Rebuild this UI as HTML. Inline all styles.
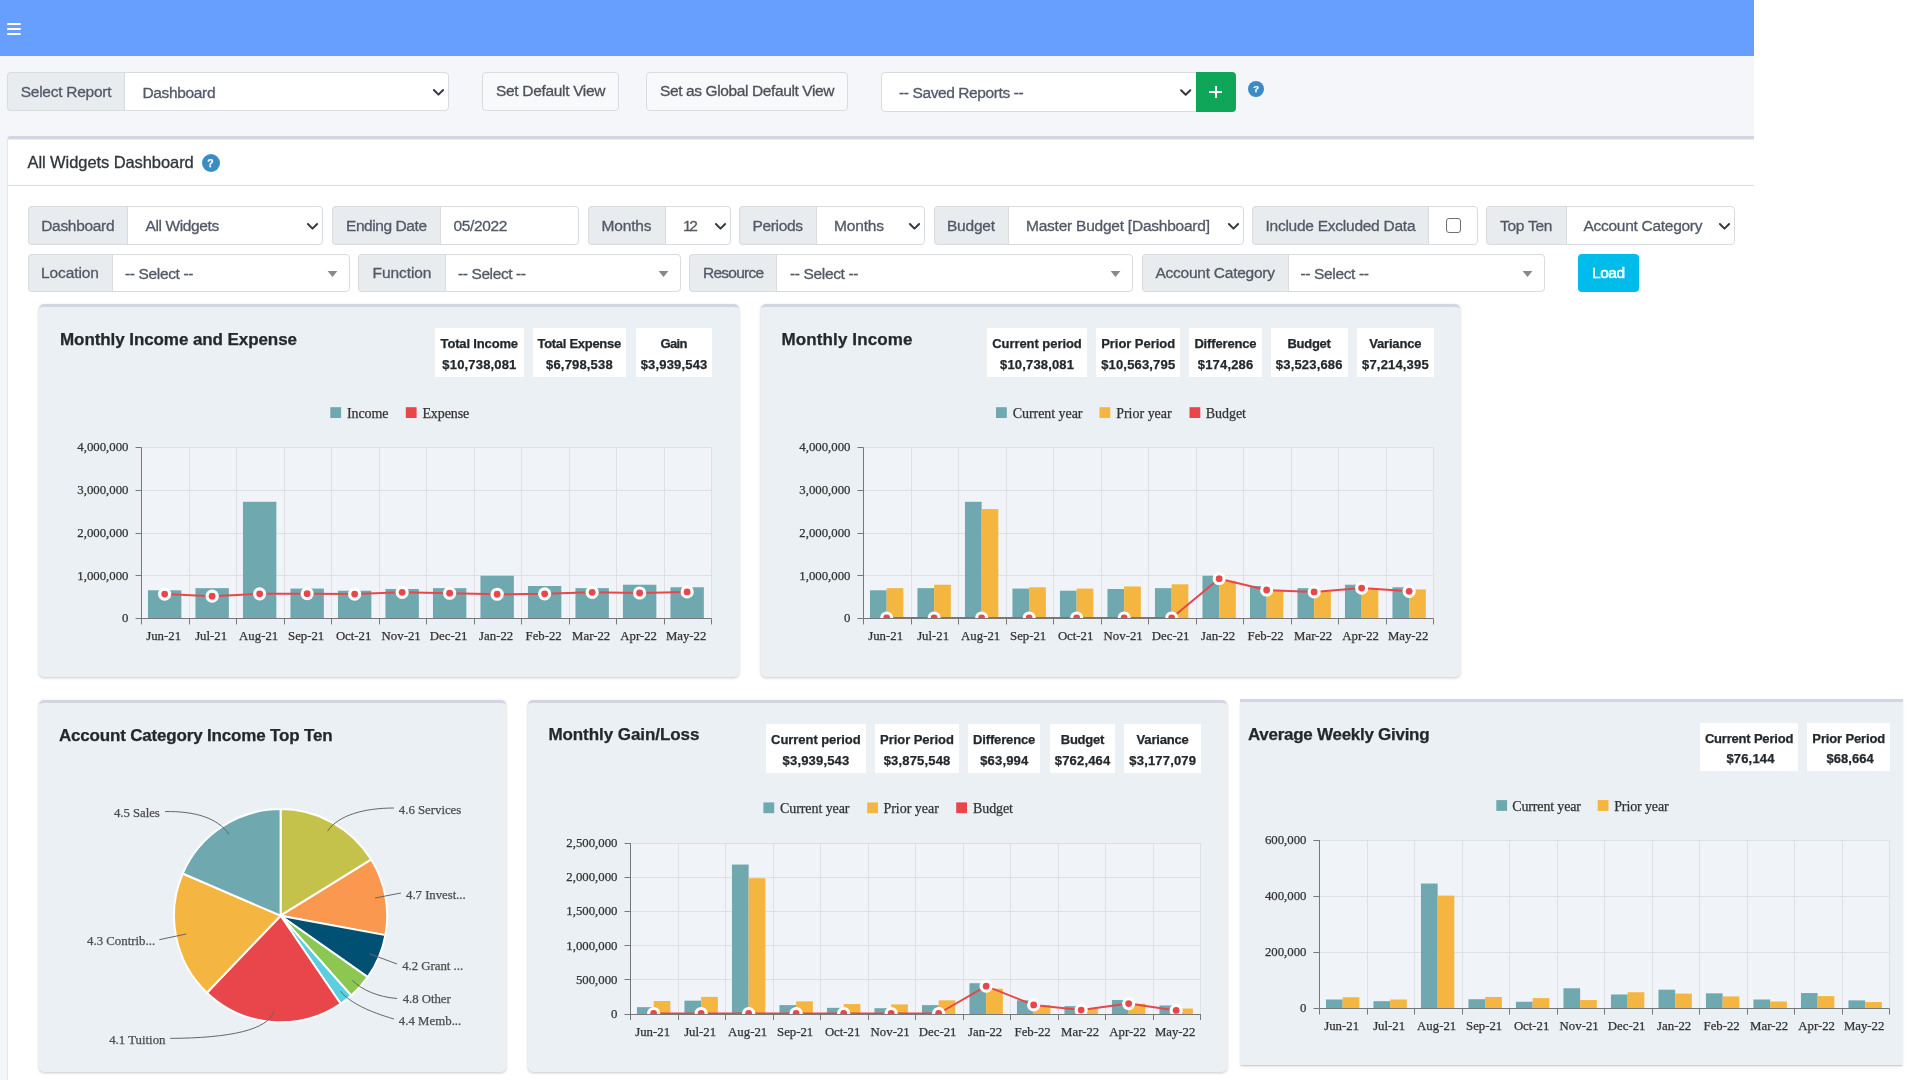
<!DOCTYPE html>
<html lang="en"><head><meta charset="utf-8"><title>All Widgets Dashboard</title>
<style>
html,body{margin:0;padding:0;background:#fff;}
body{width:1920px;height:1080px;overflow:hidden;position:relative;will-change:transform;font-family:"Liberation Sans",sans-serif;}
svg{position:absolute;left:0;top:0;}
</style></head><body>
<div style="position:absolute;left:0.00px;top:0.00px;width:1754.00px;height:1080.00px;box-sizing:border-box;background:#f4f6fa;"></div>
<div style="position:absolute;left:0.00px;top:0.00px;width:1754.00px;height:56.00px;box-sizing:border-box;background:#669fff;"></div>
<div style="position:absolute;left:7.00px;top:23.00px;width:14.00px;height:2.00px;box-sizing:border-box;background:#fff;border-radius:1px;"></div>
<div style="position:absolute;left:7.00px;top:28.00px;width:14.00px;height:2.00px;box-sizing:border-box;background:#fff;border-radius:1px;"></div>
<div style="position:absolute;left:7.00px;top:33.00px;width:14.00px;height:2.00px;box-sizing:border-box;background:#fff;border-radius:1px;"></div>
<div style="position:absolute;left:7.00px;top:72.00px;width:442.00px;height:39.00px;box-sizing:border-box;border:1px solid #d8dbe0;border-radius:4px;background:#fff;"></div>
<div style="position:absolute;left:7.00px;top:72.00px;width:117.50px;height:39.00px;box-sizing:border-box;border:1px solid #d8dbe0;border-radius:4px 0 0 4px;background:#e9ecef;"></div>
<div style="position:absolute;top:81.63px;line-height:20px;height:20px;white-space:pre;font-family:'Liberation Sans', sans-serif;font-size:15.5px;font-weight:400;color:#525866;letter-spacing:-0.264px;-webkit-text-stroke:0.3px #525866;left:20.75px;">Select Report</div>
<div style="position:absolute;top:82.83px;line-height:20px;height:20px;white-space:pre;font-family:'Liberation Sans', sans-serif;font-size:15.5px;font-weight:400;color:#525866;letter-spacing:-0.354px;-webkit-text-stroke:0.3px #525866;left:142.50px;">Dashboard</div>
<div style="position:absolute;left:482.00px;top:72.00px;width:137.00px;height:39.00px;box-sizing:border-box;border:1px solid #d8dbe0;border-radius:4px;background:#f8f9fa;"></div>
<div style="position:absolute;top:81.43px;line-height:20px;height:20px;white-space:pre;font-family:'Liberation Sans', sans-serif;font-size:15.5px;font-weight:400;color:#4d5157;letter-spacing:-0.321px;-webkit-text-stroke:0.3px #4d5157;left:496.00px;">Set Default View</div>
<div style="position:absolute;left:646.00px;top:72.00px;width:202.00px;height:39.00px;box-sizing:border-box;border:1px solid #d8dbe0;border-radius:4px;background:#f8f9fa;"></div>
<div style="position:absolute;top:81.43px;line-height:20px;height:20px;white-space:pre;font-family:'Liberation Sans', sans-serif;font-size:15.5px;font-weight:400;color:#4d5157;letter-spacing:-0.384px;-webkit-text-stroke:0.3px #4d5157;left:660.00px;">Set as Global Default View</div>
<div style="position:absolute;left:881.00px;top:72.00px;width:316.00px;height:39.50px;box-sizing:border-box;border:1px solid #d8dbe0;border-radius:4px 0 0 4px;background:#fff;"></div>
<div style="position:absolute;top:82.93px;line-height:20px;height:20px;white-space:pre;font-family:'Liberation Sans', sans-serif;font-size:15.5px;font-weight:400;color:#525866;letter-spacing:-0.405px;-webkit-text-stroke:0.3px #525866;left:899.10px;">-- Saved Reports --</div>
<div style="position:absolute;left:1195.50px;top:72.00px;width:40.50px;height:39.50px;box-sizing:border-box;background:#10a65a;border-radius:0 4px 4px 0;"></div>
<div style="position:absolute;left:1209.30px;top:91.00px;width:12.40px;height:2.00px;box-sizing:border-box;background:#fff;"></div>
<div style="position:absolute;left:1214.50px;top:85.80px;width:2.00px;height:12.40px;box-sizing:border-box;background:#fff;"></div>
<div style="position:absolute;left:1248.10px;top:81.10px;width:16.00px;height:16.00px;box-sizing:border-box;background:#3a8cc4;border-radius:50%;"></div>
<div style="position:absolute;top:79.23px;line-height:20px;height:20px;white-space:pre;font-family:'Liberation Sans', sans-serif;font-size:9.5px;font-weight:700;color:#fff;letter-spacing:0px;-webkit-text-stroke:0.25px #fff;left:1256.10px;width:0;display:flex;justify-content:center;"><span>?</span></div>
<div style="position:absolute;left:7.00px;top:136.00px;width:1918.00px;height:964.00px;box-sizing:border-box;background:#fff;border:1px solid #e4e7ea;border-top:3px solid #d3d6e0;border-radius:4px 0 0 0;"></div>
<div style="position:absolute;left:9.00px;top:139.00px;width:1745.00px;height:1.00px;box-sizing:border-box;background:#eceef2;"></div>
<div style="position:absolute;left:1754.00px;top:0.00px;width:166.00px;height:303.00px;box-sizing:border-box;background:#fff;"></div>
<div style="position:absolute;left:8.00px;top:185.00px;width:1746.00px;height:1.00px;box-sizing:border-box;background:#d8dbe0;"></div>
<div style="position:absolute;top:151.78px;line-height:20px;height:20px;white-space:pre;font-family:'Liberation Sans', sans-serif;font-size:16.5px;font-weight:400;color:#30353b;letter-spacing:-0.079px;-webkit-text-stroke:0.3px #30353b;left:27.50px;">All Widgets Dashboard</div>
<div style="position:absolute;left:201.50px;top:154.00px;width:18.00px;height:18.00px;box-sizing:border-box;background:#3a8cc4;border-radius:50%;"></div>
<div style="position:absolute;top:153.14px;line-height:20px;height:20px;white-space:pre;font-family:'Liberation Sans', sans-serif;font-size:10.5px;font-weight:700;color:#fff;letter-spacing:0px;-webkit-text-stroke:0.25px #fff;left:210.50px;width:0;display:flex;justify-content:center;"><span>?</span></div>
<div style="position:absolute;left:28.00px;top:206.00px;width:295.00px;height:39.00px;box-sizing:border-box;border:1px solid #d8dbe0;border-radius:4px;background:#fff;"></div>
<div style="position:absolute;left:28.00px;top:206.00px;width:99.50px;height:39.00px;box-sizing:border-box;border:1px solid #d8dbe0;border-radius:4px 0 0 4px;background:#e9ecef;"></div>
<div style="position:absolute;top:216.43px;line-height:20px;height:20px;white-space:pre;font-family:'Liberation Sans', sans-serif;font-size:15.5px;font-weight:400;color:#525866;letter-spacing:-0.322px;-webkit-text-stroke:0.3px #525866;left:41.25px;">Dashboard</div>
<div style="position:absolute;top:216.43px;line-height:20px;height:20px;white-space:pre;font-family:'Liberation Sans', sans-serif;font-size:15.5px;font-weight:400;color:#525866;letter-spacing:-0.378px;-webkit-text-stroke:0.3px #525866;left:145.50px;">All Widgets</div>
<div style="position:absolute;left:332.00px;top:206.00px;width:247.00px;height:39.00px;box-sizing:border-box;border:1px solid #d8dbe0;border-radius:4px;background:#fff;"></div>
<div style="position:absolute;left:332.00px;top:206.00px;width:109.00px;height:39.00px;box-sizing:border-box;border:1px solid #d8dbe0;border-radius:4px 0 0 4px;background:#e9ecef;"></div>
<div style="position:absolute;top:216.43px;line-height:20px;height:20px;white-space:pre;font-family:'Liberation Sans', sans-serif;font-size:15.5px;font-weight:400;color:#525866;letter-spacing:-0.431px;-webkit-text-stroke:0.3px #525866;left:346.00px;">Ending Date</div>
<div style="position:absolute;top:216.43px;line-height:20px;height:20px;white-space:pre;font-family:'Liberation Sans', sans-serif;font-size:15.5px;font-weight:400;color:#525866;letter-spacing:-0.339px;-webkit-text-stroke:0.3px #525866;left:453.50px;">05/2022</div>
<div style="position:absolute;left:588.00px;top:206.00px;width:143.00px;height:39.00px;box-sizing:border-box;border:1px solid #d8dbe0;border-radius:4px;background:#fff;"></div>
<div style="position:absolute;left:588.00px;top:206.00px;width:78.00px;height:39.00px;box-sizing:border-box;border:1px solid #d8dbe0;border-radius:4px 0 0 4px;background:#e9ecef;"></div>
<div style="position:absolute;top:216.43px;line-height:20px;height:20px;white-space:pre;font-family:'Liberation Sans', sans-serif;font-size:15.5px;font-weight:400;color:#525866;letter-spacing:-0.169px;-webkit-text-stroke:0.3px #525866;left:601.50px;">Months</div>
<div style="position:absolute;top:216.43px;line-height:20px;height:20px;white-space:pre;font-family:'Liberation Sans', sans-serif;font-size:15.5px;font-weight:400;color:#525866;letter-spacing:-2.25px;-webkit-text-stroke:0.3px #525866;left:683.00px;">12</div>
<div style="position:absolute;left:739.00px;top:206.00px;width:186.00px;height:39.00px;box-sizing:border-box;border:1px solid #d8dbe0;border-radius:4px;background:#fff;"></div>
<div style="position:absolute;left:739.00px;top:206.00px;width:78.00px;height:39.00px;box-sizing:border-box;border:1px solid #d8dbe0;border-radius:4px 0 0 4px;background:#e9ecef;"></div>
<div style="position:absolute;top:216.43px;line-height:20px;height:20px;white-space:pre;font-family:'Liberation Sans', sans-serif;font-size:15.5px;font-weight:400;color:#525866;letter-spacing:-0.344px;-webkit-text-stroke:0.3px #525866;left:752.50px;">Periods</div>
<div style="position:absolute;top:216.43px;line-height:20px;height:20px;white-space:pre;font-family:'Liberation Sans', sans-serif;font-size:15.5px;font-weight:400;color:#525866;letter-spacing:-0.169px;-webkit-text-stroke:0.3px #525866;left:834.00px;">Months</div>
<div style="position:absolute;left:934.00px;top:206.00px;width:310.00px;height:39.00px;box-sizing:border-box;border:1px solid #d8dbe0;border-radius:4px;background:#fff;"></div>
<div style="position:absolute;left:934.00px;top:206.00px;width:75.00px;height:39.00px;box-sizing:border-box;border:1px solid #d8dbe0;border-radius:4px 0 0 4px;background:#e9ecef;"></div>
<div style="position:absolute;top:216.43px;line-height:20px;height:20px;white-space:pre;font-family:'Liberation Sans', sans-serif;font-size:15.5px;font-weight:400;color:#525866;letter-spacing:-0.228px;-webkit-text-stroke:0.3px #525866;left:947.00px;">Budget</div>
<div style="position:absolute;top:216.43px;line-height:20px;height:20px;white-space:pre;font-family:'Liberation Sans', sans-serif;font-size:15.5px;font-weight:400;color:#525866;letter-spacing:-0.232px;-webkit-text-stroke:0.3px #525866;left:1026.00px;">Master Budget [Dashboard]</div>
<div style="position:absolute;left:1252.00px;top:206.00px;width:226.00px;height:39.00px;box-sizing:border-box;border:1px solid #d8dbe0;border-radius:4px;background:#fff;"></div>
<div style="position:absolute;left:1252.00px;top:206.00px;width:177.00px;height:39.00px;box-sizing:border-box;border:1px solid #d8dbe0;border-radius:4px 0 0 4px;background:#e9ecef;"></div>
<div style="position:absolute;top:216.43px;line-height:20px;height:20px;white-space:pre;font-family:'Liberation Sans', sans-serif;font-size:15.5px;font-weight:400;color:#525866;letter-spacing:-0.255px;-webkit-text-stroke:0.3px #525866;left:1265.50px;">Include Excluded Data</div>
<div style="position:absolute;left:1445.75px;top:218.30px;width:15.00px;height:15.00px;box-sizing:border-box;border:1.5px solid #6f6f6f;border-radius:3px;background:#fff;"></div>
<div style="position:absolute;left:1486.00px;top:206.00px;width:249.00px;height:39.00px;box-sizing:border-box;border:1px solid #d8dbe0;border-radius:4px;background:#fff;"></div>
<div style="position:absolute;left:1486.00px;top:206.00px;width:80.50px;height:39.00px;box-sizing:border-box;border:1px solid #d8dbe0;border-radius:4px 0 0 4px;background:#e9ecef;"></div>
<div style="position:absolute;top:216.43px;line-height:20px;height:20px;white-space:pre;font-family:'Liberation Sans', sans-serif;font-size:15.5px;font-weight:400;color:#525866;letter-spacing:-0.253px;-webkit-text-stroke:0.3px #525866;left:1500.00px;">Top Ten</div>
<div style="position:absolute;top:216.43px;line-height:20px;height:20px;white-space:pre;font-family:'Liberation Sans', sans-serif;font-size:15.5px;font-weight:400;color:#525866;letter-spacing:-0.281px;-webkit-text-stroke:0.3px #525866;left:1583.50px;">Account Category</div>
<div style="position:absolute;left:28.00px;top:254.00px;width:322.00px;height:38.00px;box-sizing:border-box;border:1px solid #d8dbe0;border-radius:4px;background:#fff;"></div>
<div style="position:absolute;left:28.00px;top:254.00px;width:84.50px;height:38.00px;box-sizing:border-box;border:1px solid #d8dbe0;border-radius:4px 0 0 4px;background:#e9ecef;"></div>
<div style="position:absolute;top:262.83px;line-height:20px;height:20px;white-space:pre;font-family:'Liberation Sans', sans-serif;font-size:15.5px;font-weight:400;color:#525866;letter-spacing:-0.087px;-webkit-text-stroke:0.3px #525866;left:41.00px;">Location</div>
<div style="position:absolute;top:264.03px;line-height:20px;height:20px;white-space:pre;font-family:'Liberation Sans', sans-serif;font-size:15.5px;font-weight:400;color:#525866;letter-spacing:-0.349px;-webkit-text-stroke:0.3px #525866;left:125.00px;">-- Select --</div>
<div style="position:absolute;left:358.00px;top:254.00px;width:323.00px;height:38.00px;box-sizing:border-box;border:1px solid #d8dbe0;border-radius:4px;background:#fff;"></div>
<div style="position:absolute;left:358.00px;top:254.00px;width:87.50px;height:38.00px;box-sizing:border-box;border:1px solid #d8dbe0;border-radius:4px 0 0 4px;background:#e9ecef;"></div>
<div style="position:absolute;top:262.83px;line-height:20px;height:20px;white-space:pre;font-family:'Liberation Sans', sans-serif;font-size:15.5px;font-weight:400;color:#525866;letter-spacing:-0.065px;-webkit-text-stroke:0.3px #525866;left:372.50px;">Function</div>
<div style="position:absolute;top:264.03px;line-height:20px;height:20px;white-space:pre;font-family:'Liberation Sans', sans-serif;font-size:15.5px;font-weight:400;color:#525866;letter-spacing:-0.395px;-webkit-text-stroke:0.3px #525866;left:458.00px;">-- Select --</div>
<div style="position:absolute;left:689.00px;top:254.00px;width:444.00px;height:38.00px;box-sizing:border-box;border:1px solid #d8dbe0;border-radius:4px;background:#fff;"></div>
<div style="position:absolute;left:689.00px;top:254.00px;width:88.00px;height:38.00px;box-sizing:border-box;border:1px solid #d8dbe0;border-radius:4px 0 0 4px;background:#e9ecef;"></div>
<div style="position:absolute;top:262.83px;line-height:20px;height:20px;white-space:pre;font-family:'Liberation Sans', sans-serif;font-size:15.5px;font-weight:400;color:#525866;letter-spacing:-0.763px;-webkit-text-stroke:0.3px #525866;left:703.00px;">Resource</div>
<div style="position:absolute;top:264.03px;line-height:20px;height:20px;white-space:pre;font-family:'Liberation Sans', sans-serif;font-size:15.5px;font-weight:400;color:#525866;letter-spacing:-0.349px;-webkit-text-stroke:0.3px #525866;left:790.00px;">-- Select --</div>
<div style="position:absolute;left:1142.00px;top:254.00px;width:403.00px;height:38.00px;box-sizing:border-box;border:1px solid #d8dbe0;border-radius:4px;background:#fff;"></div>
<div style="position:absolute;left:1142.00px;top:254.00px;width:146.50px;height:38.00px;box-sizing:border-box;border:1px solid #d8dbe0;border-radius:4px 0 0 4px;background:#e9ecef;"></div>
<div style="position:absolute;top:262.83px;line-height:20px;height:20px;white-space:pre;font-family:'Liberation Sans', sans-serif;font-size:15.5px;font-weight:400;color:#525866;letter-spacing:-0.248px;-webkit-text-stroke:0.3px #525866;left:1155.50px;">Account Category</div>
<div style="position:absolute;top:264.03px;line-height:20px;height:20px;white-space:pre;font-family:'Liberation Sans', sans-serif;font-size:15.5px;font-weight:400;color:#525866;letter-spacing:-0.349px;-webkit-text-stroke:0.3px #525866;left:1300.50px;">-- Select --</div>
<div style="position:absolute;left:1578.00px;top:254.00px;width:61.00px;height:38.00px;box-sizing:border-box;background:#00bcea;border-radius:4px;"></div>
<div style="position:absolute;top:263.13px;line-height:20px;height:20px;white-space:pre;font-family:'Liberation Sans', sans-serif;font-size:15.5px;font-weight:400;color:#fff;letter-spacing:-0.495px;-webkit-text-stroke:0.3px #fff;-webkit-text-stroke:0.5px #fff;left:1592.00px;">Load</div>
<div style="position:absolute;left:39.00px;top:304.00px;width:700.00px;height:372.50px;box-sizing:border-box;background:#ebf0f4;border-top:3px solid #d3d6e0;border-radius:5px;box-shadow:0 1px 3px rgba(0,0,0,.22);"></div>
<div style="position:absolute;top:329.61px;line-height:20px;height:20px;white-space:pre;font-family:'Liberation Sans', sans-serif;font-size:17px;font-weight:700;color:#23282c;letter-spacing:-0.08px;-webkit-text-stroke:0.25px #23282c;left:60.00px;">Monthly Income and Expense</div>
<div style="position:absolute;left:435.00px;top:328.00px;width:88.70px;height:49.00px;box-sizing:border-box;background:#fff;"></div>
<div style="position:absolute;top:334.32px;line-height:20px;height:20px;white-space:pre;font-family:'Liberation Sans', sans-serif;font-size:13px;font-weight:700;color:#23282c;letter-spacing:-0.156px;-webkit-text-stroke:0.25px #23282c;left:479.27px;width:0;display:flex;justify-content:center;"><span>Total Income</span></div>
<div style="position:absolute;top:355.15px;line-height:20px;height:20px;white-space:pre;font-family:'Liberation Sans', sans-serif;font-size:13px;font-weight:700;color:#23282c;letter-spacing:0.17px;-webkit-text-stroke:0.25px #23282c;left:479.44px;width:0;display:flex;justify-content:center;"><span>$10,738,081</span></div>
<div style="position:absolute;left:532.90px;top:328.00px;width:92.90px;height:49.00px;box-sizing:border-box;background:#fff;"></div>
<div style="position:absolute;top:334.32px;line-height:20px;height:20px;white-space:pre;font-family:'Liberation Sans', sans-serif;font-size:13px;font-weight:700;color:#23282c;letter-spacing:-0.291px;-webkit-text-stroke:0.25px #23282c;left:579.20px;width:0;display:flex;justify-content:center;"><span>Total Expense</span></div>
<div style="position:absolute;top:355.15px;line-height:20px;height:20px;white-space:pre;font-family:'Liberation Sans', sans-serif;font-size:13px;font-weight:700;color:#23282c;letter-spacing:0.17px;-webkit-text-stroke:0.25px #23282c;left:579.43px;width:0;display:flex;justify-content:center;"><span>$6,798,538</span></div>
<div style="position:absolute;left:635.60px;top:328.00px;width:76.80px;height:49.00px;box-sizing:border-box;background:#fff;"></div>
<div style="position:absolute;top:334.32px;line-height:20px;height:20px;white-space:pre;font-family:'Liberation Sans', sans-serif;font-size:13px;font-weight:700;color:#23282c;letter-spacing:-0.669px;-webkit-text-stroke:0.25px #23282c;left:673.67px;width:0;display:flex;justify-content:center;"><span>Gain</span></div>
<div style="position:absolute;top:355.15px;line-height:20px;height:20px;white-space:pre;font-family:'Liberation Sans', sans-serif;font-size:13px;font-weight:700;color:#23282c;letter-spacing:0.17px;-webkit-text-stroke:0.25px #23282c;left:674.09px;width:0;display:flex;justify-content:center;"><span>$3,939,543</span></div>
<div style="position:absolute;left:760.50px;top:304.00px;width:699.50px;height:372.50px;box-sizing:border-box;background:#ebf0f4;border-top:3px solid #d3d6e0;border-radius:5px;box-shadow:0 1px 3px rgba(0,0,0,.22);"></div>
<div style="position:absolute;top:329.61px;line-height:20px;height:20px;white-space:pre;font-family:'Liberation Sans', sans-serif;font-size:17px;font-weight:700;color:#23282c;letter-spacing:0.138px;-webkit-text-stroke:0.25px #23282c;left:781.40px;">Monthly Income</div>
<div style="position:absolute;left:987.00px;top:328.00px;width:100.00px;height:49.00px;box-sizing:border-box;background:#fff;"></div>
<div style="position:absolute;top:334.32px;line-height:20px;height:20px;white-space:pre;font-family:'Liberation Sans', sans-serif;font-size:13px;font-weight:700;color:#23282c;letter-spacing:-0.054px;-webkit-text-stroke:0.25px #23282c;left:1036.97px;width:0;display:flex;justify-content:center;"><span>Current period</span></div>
<div style="position:absolute;top:355.15px;line-height:20px;height:20px;white-space:pre;font-family:'Liberation Sans', sans-serif;font-size:13px;font-weight:700;color:#23282c;letter-spacing:0.17px;-webkit-text-stroke:0.25px #23282c;left:1037.09px;width:0;display:flex;justify-content:center;"><span>$10,738,081</span></div>
<div style="position:absolute;left:1096.30px;top:328.00px;width:83.70px;height:49.00px;box-sizing:border-box;background:#fff;"></div>
<div style="position:absolute;top:334.32px;line-height:20px;height:20px;white-space:pre;font-family:'Liberation Sans', sans-serif;font-size:13px;font-weight:700;color:#23282c;letter-spacing:-0.047px;-webkit-text-stroke:0.25px #23282c;left:1138.13px;width:0;display:flex;justify-content:center;"><span>Prior Period</span></div>
<div style="position:absolute;top:355.15px;line-height:20px;height:20px;white-space:pre;font-family:'Liberation Sans', sans-serif;font-size:13px;font-weight:700;color:#23282c;letter-spacing:0.17px;-webkit-text-stroke:0.25px #23282c;left:1138.24px;width:0;display:flex;justify-content:center;"><span>$10,563,795</span></div>
<div style="position:absolute;left:1189.30px;top:328.00px;width:72.40px;height:49.00px;box-sizing:border-box;background:#fff;"></div>
<div style="position:absolute;top:334.32px;line-height:20px;height:20px;white-space:pre;font-family:'Liberation Sans', sans-serif;font-size:13px;font-weight:700;color:#23282c;letter-spacing:-0.153px;-webkit-text-stroke:0.25px #23282c;left:1225.42px;width:0;display:flex;justify-content:center;"><span>Difference</span></div>
<div style="position:absolute;top:355.15px;line-height:20px;height:20px;white-space:pre;font-family:'Liberation Sans', sans-serif;font-size:13px;font-weight:700;color:#23282c;letter-spacing:0.17px;-webkit-text-stroke:0.25px #23282c;left:1225.59px;width:0;display:flex;justify-content:center;"><span>$174,286</span></div>
<div style="position:absolute;left:1270.70px;top:328.00px;width:76.90px;height:49.00px;box-sizing:border-box;background:#fff;"></div>
<div style="position:absolute;top:334.32px;line-height:20px;height:20px;white-space:pre;font-family:'Liberation Sans', sans-serif;font-size:13px;font-weight:700;color:#23282c;letter-spacing:-0.256px;-webkit-text-stroke:0.25px #23282c;left:1309.02px;width:0;display:flex;justify-content:center;"><span>Budget</span></div>
<div style="position:absolute;top:355.15px;line-height:20px;height:20px;white-space:pre;font-family:'Liberation Sans', sans-serif;font-size:13px;font-weight:700;color:#23282c;letter-spacing:0.17px;-webkit-text-stroke:0.25px #23282c;left:1309.24px;width:0;display:flex;justify-content:center;"><span>$3,523,686</span></div>
<div style="position:absolute;left:1356.90px;top:328.00px;width:76.90px;height:49.00px;box-sizing:border-box;background:#fff;"></div>
<div style="position:absolute;top:334.32px;line-height:20px;height:20px;white-space:pre;font-family:'Liberation Sans', sans-serif;font-size:13px;font-weight:700;color:#23282c;letter-spacing:-0.2px;-webkit-text-stroke:0.25px #23282c;left:1395.25px;width:0;display:flex;justify-content:center;"><span>Variance</span></div>
<div style="position:absolute;top:355.15px;line-height:20px;height:20px;white-space:pre;font-family:'Liberation Sans', sans-serif;font-size:13px;font-weight:700;color:#23282c;letter-spacing:0.17px;-webkit-text-stroke:0.25px #23282c;left:1395.43px;width:0;display:flex;justify-content:center;"><span>$7,214,395</span></div>
<div style="position:absolute;left:39.00px;top:700.00px;width:467.00px;height:372.00px;box-sizing:border-box;background:#ebf0f4;border-top:3px solid #d3d6e0;border-radius:5px;box-shadow:0 1px 3px rgba(0,0,0,.22);"></div>
<div style="position:absolute;top:725.61px;line-height:20px;height:20px;white-space:pre;font-family:'Liberation Sans', sans-serif;font-size:17px;font-weight:700;color:#23282c;letter-spacing:-0.175px;-webkit-text-stroke:0.25px #23282c;left:58.90px;">Account Category Income Top Ten</div>
<div style="position:absolute;left:528.00px;top:700.00px;width:699.00px;height:372.00px;box-sizing:border-box;background:#ebf0f4;border-top:3px solid #d3d6e0;border-radius:5px;box-shadow:0 1px 3px rgba(0,0,0,.22);"></div>
<div style="position:absolute;top:725.41px;line-height:20px;height:20px;white-space:pre;font-family:'Liberation Sans', sans-serif;font-size:17px;font-weight:700;color:#23282c;letter-spacing:-0.066px;-webkit-text-stroke:0.25px #23282c;left:548.40px;">Monthly Gain/Loss</div>
<div style="position:absolute;left:765.90px;top:724.00px;width:100.00px;height:49.00px;box-sizing:border-box;background:#fff;"></div>
<div style="position:absolute;top:730.32px;line-height:20px;height:20px;white-space:pre;font-family:'Liberation Sans', sans-serif;font-size:13px;font-weight:700;color:#23282c;letter-spacing:-0.054px;-webkit-text-stroke:0.25px #23282c;left:815.87px;width:0;display:flex;justify-content:center;"><span>Current period</span></div>
<div style="position:absolute;top:751.15px;line-height:20px;height:20px;white-space:pre;font-family:'Liberation Sans', sans-serif;font-size:13px;font-weight:700;color:#23282c;letter-spacing:0.17px;-webkit-text-stroke:0.25px #23282c;left:815.99px;width:0;display:flex;justify-content:center;"><span>$3,939,543</span></div>
<div style="position:absolute;left:875.00px;top:724.00px;width:84.00px;height:49.00px;box-sizing:border-box;background:#fff;"></div>
<div style="position:absolute;top:730.32px;line-height:20px;height:20px;white-space:pre;font-family:'Liberation Sans', sans-serif;font-size:13px;font-weight:700;color:#23282c;letter-spacing:-0.047px;-webkit-text-stroke:0.25px #23282c;left:916.98px;width:0;display:flex;justify-content:center;"><span>Prior Period</span></div>
<div style="position:absolute;top:751.15px;line-height:20px;height:20px;white-space:pre;font-family:'Liberation Sans', sans-serif;font-size:13px;font-weight:700;color:#23282c;letter-spacing:0.17px;-webkit-text-stroke:0.25px #23282c;left:917.09px;width:0;display:flex;justify-content:center;"><span>$3,875,548</span></div>
<div style="position:absolute;left:968.00px;top:724.00px;width:72.40px;height:49.00px;box-sizing:border-box;background:#fff;"></div>
<div style="position:absolute;top:730.32px;line-height:20px;height:20px;white-space:pre;font-family:'Liberation Sans', sans-serif;font-size:13px;font-weight:700;color:#23282c;letter-spacing:-0.153px;-webkit-text-stroke:0.25px #23282c;left:1004.12px;width:0;display:flex;justify-content:center;"><span>Difference</span></div>
<div style="position:absolute;top:751.15px;line-height:20px;height:20px;white-space:pre;font-family:'Liberation Sans', sans-serif;font-size:13px;font-weight:700;color:#23282c;letter-spacing:0.17px;-webkit-text-stroke:0.25px #23282c;left:1004.29px;width:0;display:flex;justify-content:center;"><span>$63,994</span></div>
<div style="position:absolute;left:1050.00px;top:724.00px;width:65.00px;height:49.00px;box-sizing:border-box;background:#fff;"></div>
<div style="position:absolute;top:730.32px;line-height:20px;height:20px;white-space:pre;font-family:'Liberation Sans', sans-serif;font-size:13px;font-weight:700;color:#23282c;letter-spacing:-0.256px;-webkit-text-stroke:0.25px #23282c;left:1082.37px;width:0;display:flex;justify-content:center;"><span>Budget</span></div>
<div style="position:absolute;top:751.15px;line-height:20px;height:20px;white-space:pre;font-family:'Liberation Sans', sans-serif;font-size:13px;font-weight:700;color:#23282c;letter-spacing:0.17px;-webkit-text-stroke:0.25px #23282c;left:1082.59px;width:0;display:flex;justify-content:center;"><span>$762,464</span></div>
<div style="position:absolute;left:1124.00px;top:724.00px;width:77.30px;height:49.00px;box-sizing:border-box;background:#fff;"></div>
<div style="position:absolute;top:730.32px;line-height:20px;height:20px;white-space:pre;font-family:'Liberation Sans', sans-serif;font-size:13px;font-weight:700;color:#23282c;letter-spacing:-0.2px;-webkit-text-stroke:0.25px #23282c;left:1162.55px;width:0;display:flex;justify-content:center;"><span>Variance</span></div>
<div style="position:absolute;top:751.15px;line-height:20px;height:20px;white-space:pre;font-family:'Liberation Sans', sans-serif;font-size:13px;font-weight:700;color:#23282c;letter-spacing:0.17px;-webkit-text-stroke:0.25px #23282c;left:1162.74px;width:0;display:flex;justify-content:center;"><span>$3,177,079</span></div>
<div style="position:absolute;left:1240.00px;top:699.00px;width:663.00px;height:366.00px;box-sizing:border-box;background:#ebf0f4;border-top:3px solid #d3d6e0;box-shadow:0 1px 0 rgba(0,0,0,.07),0 2px 3px -1px rgba(0,0,0,.2);"></div>
<div style="position:absolute;top:724.61px;line-height:20px;height:20px;white-space:pre;font-family:'Liberation Sans', sans-serif;font-size:17px;font-weight:700;color:#23282c;letter-spacing:-0.275px;-webkit-text-stroke:0.25px #23282c;left:1248.00px;">Average Weekly Giving</div>
<div style="position:absolute;left:1699.70px;top:723.20px;width:98.30px;height:47.80px;box-sizing:border-box;background:#fff;"></div>
<div style="position:absolute;top:728.51px;line-height:20px;height:20px;white-space:pre;font-family:'Liberation Sans', sans-serif;font-size:13px;font-weight:700;color:#23282c;letter-spacing:-0.194px;-webkit-text-stroke:0.25px #23282c;left:1749.05px;width:0;display:flex;justify-content:center;"><span>Current Period</span></div>
<div style="position:absolute;top:749.33px;line-height:20px;height:20px;white-space:pre;font-family:'Liberation Sans', sans-serif;font-size:13px;font-weight:700;color:#23282c;letter-spacing:0.17px;-webkit-text-stroke:0.25px #23282c;left:1750.53px;width:0;display:flex;justify-content:center;"><span>$76,144</span></div>
<div style="position:absolute;left:1807.30px;top:723.20px;width:82.30px;height:47.80px;box-sizing:border-box;background:#fff;"></div>
<div style="position:absolute;top:728.51px;line-height:20px;height:20px;white-space:pre;font-family:'Liberation Sans', sans-serif;font-size:13px;font-weight:700;color:#23282c;letter-spacing:-0.148px;-webkit-text-stroke:0.25px #23282c;left:1848.68px;width:0;display:flex;justify-content:center;"><span>Prior Period</span></div>
<div style="position:absolute;top:749.33px;line-height:20px;height:20px;white-space:pre;font-family:'Liberation Sans', sans-serif;font-size:13px;font-weight:700;color:#23282c;letter-spacing:0.059px;-webkit-text-stroke:0.25px #23282c;left:1850.08px;width:0;display:flex;justify-content:center;"><span>$68,664</span></div>
<svg width="1920" height="1080" viewBox="0 0 1920 1080">
<path d="M433.90 90.00 l4.6 4.6 l4.6 -4.6" fill="none" stroke="#343a40" stroke-width="2" stroke-linecap="round" stroke-linejoin="round"/>
<path d="M1181.10 90.20 l4.6 4.6 l4.6 -4.6" fill="none" stroke="#343a40" stroke-width="2" stroke-linecap="round" stroke-linejoin="round"/>
<path d="M307.90 224.00 l4.6 4.6 l4.6 -4.6" fill="none" stroke="#343a40" stroke-width="2" stroke-linecap="round" stroke-linejoin="round"/>
<path d="M715.90 224.00 l4.6 4.6 l4.6 -4.6" fill="none" stroke="#343a40" stroke-width="2" stroke-linecap="round" stroke-linejoin="round"/>
<path d="M909.90 224.00 l4.6 4.6 l4.6 -4.6" fill="none" stroke="#343a40" stroke-width="2" stroke-linecap="round" stroke-linejoin="round"/>
<path d="M1228.90 224.00 l4.6 4.6 l4.6 -4.6" fill="none" stroke="#343a40" stroke-width="2" stroke-linecap="round" stroke-linejoin="round"/>
<path d="M1719.90 224.00 l4.6 4.6 l4.6 -4.6" fill="none" stroke="#343a40" stroke-width="2" stroke-linecap="round" stroke-linejoin="round"/>
<path d="M327.60 271.10 h9.8 l-4.9 6 z" fill="#888"/>
<path d="M658.60 271.10 h9.8 l-4.9 6 z" fill="#888"/>
<path d="M1110.60 271.10 h9.8 l-4.9 6 z" fill="#888"/>
<path d="M1522.60 271.10 h9.8 l-4.9 6 z" fill="#888"/>
<rect x="141.50" y="447.50" width="570.00" height="171.00" fill="#f0f4f8"/>
<path d="M141.50 575.50H711.50M141.50 533.50H711.50M141.50 490.50H711.50M141.50 447.50H711.50M189.50 447.50V618.50M236.50 447.50V618.50M284.50 447.50V618.50M331.50 447.50V618.50M379.50 447.50V618.50M426.50 447.50V618.50M474.50 447.50V618.50M521.50 447.50V618.50M569.50 447.50V618.50M616.50 447.50V618.50M664.50 447.50V618.50M711.50 447.50V618.50" stroke="#e0e0e0" stroke-width="1" fill="none"/>
<rect x="147.95" y="590.28" width="33.40" height="28.21" fill="#6fa8af"/>
<rect x="195.45" y="588.15" width="33.40" height="30.35" fill="#6fa8af"/>
<rect x="242.95" y="501.79" width="33.40" height="116.71" fill="#6fa8af"/>
<rect x="290.45" y="588.58" width="33.40" height="29.93" fill="#6fa8af"/>
<rect x="337.95" y="590.71" width="33.40" height="27.79" fill="#6fa8af"/>
<rect x="385.45" y="589.00" width="33.40" height="29.50" fill="#6fa8af"/>
<rect x="432.95" y="588.15" width="33.40" height="30.35" fill="#6fa8af"/>
<rect x="480.45" y="575.75" width="33.40" height="42.75" fill="#6fa8af"/>
<rect x="527.95" y="586.01" width="33.40" height="32.49" fill="#6fa8af"/>
<rect x="575.45" y="588.15" width="33.40" height="30.35" fill="#6fa8af"/>
<rect x="622.95" y="584.73" width="33.40" height="33.77" fill="#6fa8af"/>
<rect x="670.45" y="587.29" width="33.40" height="31.21" fill="#6fa8af"/>
<clipPath id="cp1"><rect x="140.50" y="446.50" width="572.00" height="172.50"/></clipPath>
<g clip-path="url(#cp1)"><polyline points="164.65,594.06 212.15,596.20 259.65,593.85 307.15,593.63 354.65,594.06 402.15,592.35 449.65,593.21 497.15,594.27 544.65,593.85 592.15,592.35 639.65,592.99 687.15,591.92" fill="none" stroke="#e8464b" stroke-width="2" stroke-linejoin="round"/><circle cx="164.65" cy="594.06" r="6.6" fill="#fff"/><circle cx="164.65" cy="594.06" r="3.4" fill="#e8464b"/><circle cx="212.15" cy="596.20" r="6.6" fill="#fff"/><circle cx="212.15" cy="596.20" r="3.4" fill="#e8464b"/><circle cx="259.65" cy="593.85" r="6.6" fill="#fff"/><circle cx="259.65" cy="593.85" r="3.4" fill="#e8464b"/><circle cx="307.15" cy="593.63" r="6.6" fill="#fff"/><circle cx="307.15" cy="593.63" r="3.4" fill="#e8464b"/><circle cx="354.65" cy="594.06" r="6.6" fill="#fff"/><circle cx="354.65" cy="594.06" r="3.4" fill="#e8464b"/><circle cx="402.15" cy="592.35" r="6.6" fill="#fff"/><circle cx="402.15" cy="592.35" r="3.4" fill="#e8464b"/><circle cx="449.65" cy="593.21" r="6.6" fill="#fff"/><circle cx="449.65" cy="593.21" r="3.4" fill="#e8464b"/><circle cx="497.15" cy="594.27" r="6.6" fill="#fff"/><circle cx="497.15" cy="594.27" r="3.4" fill="#e8464b"/><circle cx="544.65" cy="593.85" r="6.6" fill="#fff"/><circle cx="544.65" cy="593.85" r="3.4" fill="#e8464b"/><circle cx="592.15" cy="592.35" r="6.6" fill="#fff"/><circle cx="592.15" cy="592.35" r="3.4" fill="#e8464b"/><circle cx="639.65" cy="592.99" r="6.6" fill="#fff"/><circle cx="639.65" cy="592.99" r="3.4" fill="#e8464b"/><circle cx="687.15" cy="591.92" r="6.6" fill="#fff"/><circle cx="687.15" cy="591.92" r="3.4" fill="#e8464b"/></g>
<path d="M141.50 447.50V618.50M141.50 618.50H711.50M141.50 618.50h-6M141.50 575.50h-6M141.50 533.50h-6M141.50 490.50h-6M141.50 447.50h-6M141.50 618.50v6M189.50 618.50v6M236.50 618.50v6M284.50 618.50v6M331.50 618.50v6M379.50 618.50v6M426.50 618.50v6M474.50 618.50v6M521.50 618.50v6M569.50 618.50v6M616.50 618.50v6M664.50 618.50v6M711.50 618.50v6" stroke="#787878" stroke-width="1" fill="none"/>
<text x="128.50" y="622.40" font-family='Liberation Serif, serif' font-size="12.8" font-weight="400" text-anchor="end" fill="#333" stroke="#333" stroke-width="0.25" letter-spacing="0">0</text>
<text x="128.50" y="579.65" font-family='Liberation Serif, serif' font-size="12.8" font-weight="400" text-anchor="end" fill="#333" stroke="#333" stroke-width="0.25" letter-spacing="0">1,000,000</text>
<text x="128.50" y="536.90" font-family='Liberation Serif, serif' font-size="12.8" font-weight="400" text-anchor="end" fill="#333" stroke="#333" stroke-width="0.25" letter-spacing="0">2,000,000</text>
<text x="128.50" y="494.15" font-family='Liberation Serif, serif' font-size="12.8" font-weight="400" text-anchor="end" fill="#333" stroke="#333" stroke-width="0.25" letter-spacing="0">3,000,000</text>
<text x="128.50" y="451.40" font-family='Liberation Serif, serif' font-size="12.8" font-weight="400" text-anchor="end" fill="#333" stroke="#333" stroke-width="0.25" letter-spacing="0">4,000,000</text>
<text x="163.65" y="640.10" font-family='Liberation Serif, serif' font-size="12.8" font-weight="400" text-anchor="middle" fill="#333" stroke="#333" stroke-width="0.25" letter-spacing="0">Jun-21</text>
<text x="211.15" y="640.10" font-family='Liberation Serif, serif' font-size="12.8" font-weight="400" text-anchor="middle" fill="#333" stroke="#333" stroke-width="0.25" letter-spacing="0">Jul-21</text>
<text x="258.65" y="640.10" font-family='Liberation Serif, serif' font-size="12.8" font-weight="400" text-anchor="middle" fill="#333" stroke="#333" stroke-width="0.25" letter-spacing="0">Aug-21</text>
<text x="306.15" y="640.10" font-family='Liberation Serif, serif' font-size="12.8" font-weight="400" text-anchor="middle" fill="#333" stroke="#333" stroke-width="0.25" letter-spacing="0">Sep-21</text>
<text x="353.65" y="640.10" font-family='Liberation Serif, serif' font-size="12.8" font-weight="400" text-anchor="middle" fill="#333" stroke="#333" stroke-width="0.25" letter-spacing="0">Oct-21</text>
<text x="401.15" y="640.10" font-family='Liberation Serif, serif' font-size="12.8" font-weight="400" text-anchor="middle" fill="#333" stroke="#333" stroke-width="0.25" letter-spacing="0">Nov-21</text>
<text x="448.65" y="640.10" font-family='Liberation Serif, serif' font-size="12.8" font-weight="400" text-anchor="middle" fill="#333" stroke="#333" stroke-width="0.25" letter-spacing="0">Dec-21</text>
<text x="496.15" y="640.10" font-family='Liberation Serif, serif' font-size="12.8" font-weight="400" text-anchor="middle" fill="#333" stroke="#333" stroke-width="0.25" letter-spacing="0">Jan-22</text>
<text x="543.65" y="640.10" font-family='Liberation Serif, serif' font-size="12.8" font-weight="400" text-anchor="middle" fill="#333" stroke="#333" stroke-width="0.25" letter-spacing="0">Feb-22</text>
<text x="591.15" y="640.10" font-family='Liberation Serif, serif' font-size="12.8" font-weight="400" text-anchor="middle" fill="#333" stroke="#333" stroke-width="0.25" letter-spacing="0">Mar-22</text>
<text x="638.65" y="640.10" font-family='Liberation Serif, serif' font-size="12.8" font-weight="400" text-anchor="middle" fill="#333" stroke="#333" stroke-width="0.25" letter-spacing="0">Apr-22</text>
<text x="686.15" y="640.10" font-family='Liberation Serif, serif' font-size="12.8" font-weight="400" text-anchor="middle" fill="#333" stroke="#333" stroke-width="0.25" letter-spacing="0">May-22</text>
<rect x="330.30" y="407.20" width="10.80" height="10.80" fill="#6fa8af"/>
<text x="347.00" y="418.00" font-family='Liberation Serif, serif' font-size="14" font-weight="400" text-anchor="start" fill="#333" stroke="#333" stroke-width="0.25" letter-spacing="-0.117">Income</text>
<rect x="405.80" y="407.20" width="10.80" height="10.80" fill="#e8464b"/>
<text x="422.40" y="418.00" font-family='Liberation Serif, serif' font-size="14" font-weight="400" text-anchor="start" fill="#333" stroke="#333" stroke-width="0.25" letter-spacing="-0.09">Expense</text>
<rect x="863.50" y="447.50" width="570.00" height="171.00" fill="#f0f4f8"/>
<path d="M863.50 575.50H1433.50M863.50 533.50H1433.50M863.50 490.50H1433.50M863.50 447.50H1433.50M911.50 447.50V618.50M958.50 447.50V618.50M1006.50 447.50V618.50M1053.50 447.50V618.50M1101.50 447.50V618.50M1148.50 447.50V618.50M1196.50 447.50V618.50M1243.50 447.50V618.50M1291.50 447.50V618.50M1338.50 447.50V618.50M1386.50 447.50V618.50M1433.50 447.50V618.50" stroke="#e0e0e0" stroke-width="1" fill="none"/>
<rect x="869.95" y="590.28" width="16.70" height="28.21" fill="#6fa8af"/>
<rect x="917.45" y="588.15" width="16.70" height="30.35" fill="#6fa8af"/>
<rect x="964.95" y="501.79" width="16.70" height="116.71" fill="#6fa8af"/>
<rect x="1012.45" y="588.58" width="16.70" height="29.93" fill="#6fa8af"/>
<rect x="1059.95" y="590.71" width="16.70" height="27.79" fill="#6fa8af"/>
<rect x="1107.45" y="589.00" width="16.70" height="29.50" fill="#6fa8af"/>
<rect x="1154.95" y="588.15" width="16.70" height="30.35" fill="#6fa8af"/>
<rect x="1202.45" y="575.75" width="16.70" height="42.75" fill="#6fa8af"/>
<rect x="1249.95" y="586.01" width="16.70" height="32.49" fill="#6fa8af"/>
<rect x="1297.45" y="588.15" width="16.70" height="30.35" fill="#6fa8af"/>
<rect x="1344.95" y="584.73" width="16.70" height="33.77" fill="#6fa8af"/>
<rect x="1392.45" y="587.29" width="16.70" height="31.21" fill="#6fa8af"/>
<rect x="886.65" y="588.15" width="16.70" height="30.35" fill="#f5b541"/>
<rect x="934.15" y="584.73" width="16.70" height="33.77" fill="#f5b541"/>
<rect x="981.65" y="509.06" width="16.70" height="109.44" fill="#f5b541"/>
<rect x="1029.15" y="587.29" width="16.70" height="31.21" fill="#f5b541"/>
<rect x="1076.65" y="588.58" width="16.70" height="29.93" fill="#f5b541"/>
<rect x="1124.15" y="586.44" width="16.70" height="32.06" fill="#f5b541"/>
<rect x="1171.65" y="584.30" width="16.70" height="34.20" fill="#f5b541"/>
<rect x="1219.15" y="580.88" width="16.70" height="37.62" fill="#f5b541"/>
<rect x="1266.65" y="590.28" width="16.70" height="28.21" fill="#f5b541"/>
<rect x="1314.15" y="591.57" width="16.70" height="26.93" fill="#f5b541"/>
<rect x="1361.65" y="588.15" width="16.70" height="30.35" fill="#f5b541"/>
<rect x="1409.15" y="589.43" width="16.70" height="29.07" fill="#f5b541"/>
<clipPath id="cp2"><rect x="862.50" y="446.50" width="572.00" height="172.50"/></clipPath>
<g clip-path="url(#cp2)"><polyline points="886.65,618.00 934.15,618.00 981.65,618.00 1029.15,618.00 1076.65,618.00 1124.15,618.00 1171.65,618.00 1219.15,578.67 1266.65,590.00 1314.15,591.92 1361.65,588.08 1409.15,591.28" fill="none" stroke="#e8464b" stroke-width="2" stroke-linejoin="round"/><circle cx="886.65" cy="618.00" r="6.6" fill="#fff"/><circle cx="886.65" cy="618.00" r="3.4" fill="#e8464b"/><circle cx="934.15" cy="618.00" r="6.6" fill="#fff"/><circle cx="934.15" cy="618.00" r="3.4" fill="#e8464b"/><circle cx="981.65" cy="618.00" r="6.6" fill="#fff"/><circle cx="981.65" cy="618.00" r="3.4" fill="#e8464b"/><circle cx="1029.15" cy="618.00" r="6.6" fill="#fff"/><circle cx="1029.15" cy="618.00" r="3.4" fill="#e8464b"/><circle cx="1076.65" cy="618.00" r="6.6" fill="#fff"/><circle cx="1076.65" cy="618.00" r="3.4" fill="#e8464b"/><circle cx="1124.15" cy="618.00" r="6.6" fill="#fff"/><circle cx="1124.15" cy="618.00" r="3.4" fill="#e8464b"/><circle cx="1171.65" cy="618.00" r="6.6" fill="#fff"/><circle cx="1171.65" cy="618.00" r="3.4" fill="#e8464b"/><circle cx="1219.15" cy="578.67" r="6.6" fill="#fff"/><circle cx="1219.15" cy="578.67" r="3.4" fill="#e8464b"/><circle cx="1266.65" cy="590.00" r="6.6" fill="#fff"/><circle cx="1266.65" cy="590.00" r="3.4" fill="#e8464b"/><circle cx="1314.15" cy="591.92" r="6.6" fill="#fff"/><circle cx="1314.15" cy="591.92" r="3.4" fill="#e8464b"/><circle cx="1361.65" cy="588.08" r="6.6" fill="#fff"/><circle cx="1361.65" cy="588.08" r="3.4" fill="#e8464b"/><circle cx="1409.15" cy="591.28" r="6.6" fill="#fff"/><circle cx="1409.15" cy="591.28" r="3.4" fill="#e8464b"/></g>
<path d="M863.50 447.50V618.50M863.50 618.50H1433.50M863.50 618.50h-6M863.50 575.50h-6M863.50 533.50h-6M863.50 490.50h-6M863.50 447.50h-6M863.50 618.50v6M911.50 618.50v6M958.50 618.50v6M1006.50 618.50v6M1053.50 618.50v6M1101.50 618.50v6M1148.50 618.50v6M1196.50 618.50v6M1243.50 618.50v6M1291.50 618.50v6M1338.50 618.50v6M1386.50 618.50v6M1433.50 618.50v6" stroke="#787878" stroke-width="1" fill="none"/>
<text x="850.50" y="622.40" font-family='Liberation Serif, serif' font-size="12.8" font-weight="400" text-anchor="end" fill="#333" stroke="#333" stroke-width="0.25" letter-spacing="0">0</text>
<text x="850.50" y="579.65" font-family='Liberation Serif, serif' font-size="12.8" font-weight="400" text-anchor="end" fill="#333" stroke="#333" stroke-width="0.25" letter-spacing="0">1,000,000</text>
<text x="850.50" y="536.90" font-family='Liberation Serif, serif' font-size="12.8" font-weight="400" text-anchor="end" fill="#333" stroke="#333" stroke-width="0.25" letter-spacing="0">2,000,000</text>
<text x="850.50" y="494.15" font-family='Liberation Serif, serif' font-size="12.8" font-weight="400" text-anchor="end" fill="#333" stroke="#333" stroke-width="0.25" letter-spacing="0">3,000,000</text>
<text x="850.50" y="451.40" font-family='Liberation Serif, serif' font-size="12.8" font-weight="400" text-anchor="end" fill="#333" stroke="#333" stroke-width="0.25" letter-spacing="0">4,000,000</text>
<text x="885.65" y="640.10" font-family='Liberation Serif, serif' font-size="12.8" font-weight="400" text-anchor="middle" fill="#333" stroke="#333" stroke-width="0.25" letter-spacing="0">Jun-21</text>
<text x="933.15" y="640.10" font-family='Liberation Serif, serif' font-size="12.8" font-weight="400" text-anchor="middle" fill="#333" stroke="#333" stroke-width="0.25" letter-spacing="0">Jul-21</text>
<text x="980.65" y="640.10" font-family='Liberation Serif, serif' font-size="12.8" font-weight="400" text-anchor="middle" fill="#333" stroke="#333" stroke-width="0.25" letter-spacing="0">Aug-21</text>
<text x="1028.15" y="640.10" font-family='Liberation Serif, serif' font-size="12.8" font-weight="400" text-anchor="middle" fill="#333" stroke="#333" stroke-width="0.25" letter-spacing="0">Sep-21</text>
<text x="1075.65" y="640.10" font-family='Liberation Serif, serif' font-size="12.8" font-weight="400" text-anchor="middle" fill="#333" stroke="#333" stroke-width="0.25" letter-spacing="0">Oct-21</text>
<text x="1123.15" y="640.10" font-family='Liberation Serif, serif' font-size="12.8" font-weight="400" text-anchor="middle" fill="#333" stroke="#333" stroke-width="0.25" letter-spacing="0">Nov-21</text>
<text x="1170.65" y="640.10" font-family='Liberation Serif, serif' font-size="12.8" font-weight="400" text-anchor="middle" fill="#333" stroke="#333" stroke-width="0.25" letter-spacing="0">Dec-21</text>
<text x="1218.15" y="640.10" font-family='Liberation Serif, serif' font-size="12.8" font-weight="400" text-anchor="middle" fill="#333" stroke="#333" stroke-width="0.25" letter-spacing="0">Jan-22</text>
<text x="1265.65" y="640.10" font-family='Liberation Serif, serif' font-size="12.8" font-weight="400" text-anchor="middle" fill="#333" stroke="#333" stroke-width="0.25" letter-spacing="0">Feb-22</text>
<text x="1313.15" y="640.10" font-family='Liberation Serif, serif' font-size="12.8" font-weight="400" text-anchor="middle" fill="#333" stroke="#333" stroke-width="0.25" letter-spacing="0">Mar-22</text>
<text x="1360.65" y="640.10" font-family='Liberation Serif, serif' font-size="12.8" font-weight="400" text-anchor="middle" fill="#333" stroke="#333" stroke-width="0.25" letter-spacing="0">Apr-22</text>
<text x="1408.15" y="640.10" font-family='Liberation Serif, serif' font-size="12.8" font-weight="400" text-anchor="middle" fill="#333" stroke="#333" stroke-width="0.25" letter-spacing="0">May-22</text>
<rect x="996.00" y="407.20" width="10.80" height="10.80" fill="#6fa8af"/>
<text x="1012.70" y="418.00" font-family='Liberation Serif, serif' font-size="14" font-weight="400" text-anchor="start" fill="#333" stroke="#333" stroke-width="0.25" letter-spacing="-0.051">Current year</text>
<rect x="1099.50" y="407.20" width="10.80" height="10.80" fill="#f5b541"/>
<text x="1116.20" y="418.00" font-family='Liberation Serif, serif' font-size="14" font-weight="400" text-anchor="start" fill="#333" stroke="#333" stroke-width="0.25" letter-spacing="-0.01">Prior year</text>
<rect x="1189.50" y="407.20" width="10.80" height="10.80" fill="#e8464b"/>
<text x="1205.80" y="418.00" font-family='Liberation Serif, serif' font-size="14" font-weight="400" text-anchor="start" fill="#333" stroke="#333" stroke-width="0.25" letter-spacing="-0.051">Budget</text>
<path d="M280.60 915.70L280.60 809.10A106.60 106.60 0 0 1 371.20 859.53Z" fill="#c4c24a" stroke="#fff" stroke-width="2" stroke-linejoin="round"/>
<path d="M280.60 915.70L371.20 859.53A106.60 106.60 0 0 1 385.41 935.13Z" fill="#fa9850" stroke="#fff" stroke-width="2" stroke-linejoin="round"/>
<path d="M280.60 915.70L385.41 935.13A106.60 106.60 0 0 1 367.71 977.15Z" fill="#005073" stroke="#fff" stroke-width="2" stroke-linejoin="round"/>
<path d="M280.60 915.70L367.71 977.15A106.60 106.60 0 0 1 351.24 995.54Z" fill="#8cc751" stroke="#fff" stroke-width="2" stroke-linejoin="round"/>
<path d="M280.60 915.70L351.24 995.54A106.60 106.60 0 0 1 340.67 1003.76Z" fill="#5bcee0" stroke="#fff" stroke-width="2" stroke-linejoin="round"/>
<path d="M280.60 915.70L340.67 1003.76A106.60 106.60 0 0 1 206.88 992.70Z" fill="#e8464b" stroke="#fff" stroke-width="2" stroke-linejoin="round"/>
<path d="M280.60 915.70L206.88 992.70A106.60 106.60 0 0 1 182.69 873.53Z" fill="#f5b541" stroke="#fff" stroke-width="2" stroke-linejoin="round"/>
<path d="M280.60 915.70L182.69 873.53A106.60 106.60 0 0 1 280.60 809.10Z" fill="#6fa8af" stroke="#fff" stroke-width="2" stroke-linejoin="round"/>
<text x="113.90" y="817.00" font-family='Liberation Serif, serif' font-size="12.8" font-weight="400" text-anchor="start" fill="#4d4d4d" stroke="#4d4d4d" stroke-width="0.25" letter-spacing="-0.04">4.5 Sales</text>
<path d="M165 811.6C195 811 218 818 229 834.4" fill="none" stroke="#666" stroke-width="1"/>
<text x="87.00" y="945.10" font-family='Liberation Serif, serif' font-size="12.8" font-weight="400" text-anchor="start" fill="#4d4d4d" stroke="#4d4d4d" stroke-width="0.25" letter-spacing="0.015">4.3 Contrib...</text>
<path d="M159.3 939.7L186.2 934" fill="none" stroke="#666" stroke-width="1"/>
<text x="109.20" y="1043.60" font-family='Liberation Serif, serif' font-size="12.8" font-weight="400" text-anchor="start" fill="#4d4d4d" stroke="#4d4d4d" stroke-width="0.25" letter-spacing="0.01">4.1 Tuition</text>
<path d="M170.2 1038.4C230 1038 268 1030 273.6 1011.5" fill="none" stroke="#666" stroke-width="1"/>
<text x="398.80" y="813.70" font-family='Liberation Serif, serif' font-size="12.8" font-weight="400" text-anchor="start" fill="#4d4d4d" stroke="#4d4d4d" stroke-width="0.25" letter-spacing="-0.006">4.6 Services</text>
<path d="M393.9 808C365 808 338 815 327.5 831.3" fill="none" stroke="#666" stroke-width="1"/>
<text x="406.10" y="898.70" font-family='Liberation Serif, serif' font-size="12.8" font-weight="400" text-anchor="start" fill="#4d4d4d" stroke="#4d4d4d" stroke-width="0.25" letter-spacing="-0.04">4.7 Invest...</text>
<path d="M400.9 893L375 898" fill="none" stroke="#666" stroke-width="1"/>
<text x="402.20" y="969.70" font-family='Liberation Serif, serif' font-size="12.8" font-weight="400" text-anchor="start" fill="#4d4d4d" stroke="#4d4d4d" stroke-width="0.25" letter-spacing="-0.02">4.2 Grant ...</text>
<path d="M397 964L369.3 953.7" fill="none" stroke="#666" stroke-width="1"/>
<text x="402.70" y="1002.90" font-family='Liberation Serif, serif' font-size="12.8" font-weight="400" text-anchor="start" fill="#4d4d4d" stroke="#4d4d4d" stroke-width="0.25" letter-spacing="-0.043">4.8 Other</text>
<path d="M397 998.5C378 997 362 990 352.4 980.4" fill="none" stroke="#666" stroke-width="1"/>
<text x="398.80" y="1025.00" font-family='Liberation Serif, serif' font-size="12.8" font-weight="400" text-anchor="start" fill="#4d4d4d" stroke="#4d4d4d" stroke-width="0.25" letter-spacing="0.028">4.4 Memb...</text>
<path d="M393.9 1019C370 1012 350 1003 340.5 991.2" fill="none" stroke="#666" stroke-width="1"/>
<rect x="630.50" y="843.00" width="570.00" height="171.00" fill="#f0f4f8"/>
<path d="M630.50 979.50H1200.50M630.50 945.50H1200.50M630.50 911.50H1200.50M630.50 877.50H1200.50M630.50 843.50H1200.50M678.50 843.00V1014.00M725.50 843.00V1014.00M773.50 843.00V1014.00M820.50 843.00V1014.00M868.50 843.00V1014.00M915.50 843.00V1014.00M963.50 843.00V1014.00M1010.50 843.00V1014.00M1058.50 843.00V1014.00M1105.50 843.00V1014.00M1153.50 843.00V1014.00M1200.50 843.00V1014.00" stroke="#e0e0e0" stroke-width="1" fill="none"/>
<rect x="636.95" y="1007.16" width="16.70" height="6.84" fill="#6fa8af"/>
<rect x="684.45" y="1000.66" width="16.70" height="13.34" fill="#6fa8af"/>
<rect x="731.95" y="864.55" width="16.70" height="149.45" fill="#6fa8af"/>
<rect x="779.45" y="1005.11" width="16.70" height="8.89" fill="#6fa8af"/>
<rect x="826.95" y="1007.84" width="16.70" height="6.16" fill="#6fa8af"/>
<rect x="874.45" y="1008.19" width="16.70" height="5.81" fill="#6fa8af"/>
<rect x="921.95" y="1005.11" width="16.70" height="8.89" fill="#6fa8af"/>
<rect x="969.45" y="983.22" width="16.70" height="30.78" fill="#6fa8af"/>
<rect x="1016.95" y="1000.32" width="16.70" height="13.68" fill="#6fa8af"/>
<rect x="1064.45" y="1006.13" width="16.70" height="7.87" fill="#6fa8af"/>
<rect x="1111.95" y="999.98" width="16.70" height="14.02" fill="#6fa8af"/>
<rect x="1159.45" y="1005.45" width="16.70" height="8.55" fill="#6fa8af"/>
<rect x="653.65" y="1001.00" width="16.70" height="13.00" fill="#f5b541"/>
<rect x="701.15" y="996.90" width="16.70" height="17.10" fill="#f5b541"/>
<rect x="748.65" y="878.23" width="16.70" height="135.77" fill="#f5b541"/>
<rect x="796.15" y="1001.35" width="16.70" height="12.65" fill="#f5b541"/>
<rect x="843.65" y="1004.08" width="16.70" height="9.92" fill="#f5b541"/>
<rect x="891.15" y="1004.42" width="16.70" height="9.58" fill="#f5b541"/>
<rect x="938.65" y="1000.32" width="16.70" height="13.68" fill="#f5b541"/>
<rect x="986.15" y="988.69" width="16.70" height="25.31" fill="#f5b541"/>
<rect x="1033.65" y="1005.11" width="16.70" height="8.89" fill="#f5b541"/>
<rect x="1081.15" y="1008.87" width="16.70" height="5.13" fill="#f5b541"/>
<rect x="1128.65" y="1003.74" width="16.70" height="10.26" fill="#f5b541"/>
<rect x="1176.15" y="1008.53" width="16.70" height="5.47" fill="#f5b541"/>
<clipPath id="cp3"><rect x="629.50" y="842.00" width="572.00" height="172.50"/></clipPath>
<g clip-path="url(#cp3)"><polyline points="653.65,1013.50 701.15,1013.50 748.65,1013.50 796.15,1013.50 843.65,1013.50 891.15,1013.50 938.65,1013.50 986.15,986.14 1033.65,1004.95 1081.15,1010.08 1128.65,1003.58 1176.15,1010.42" fill="none" stroke="#e8464b" stroke-width="2" stroke-linejoin="round"/><circle cx="653.65" cy="1013.50" r="6.6" fill="#fff"/><circle cx="653.65" cy="1013.50" r="3.4" fill="#e8464b"/><circle cx="701.15" cy="1013.50" r="6.6" fill="#fff"/><circle cx="701.15" cy="1013.50" r="3.4" fill="#e8464b"/><circle cx="748.65" cy="1013.50" r="6.6" fill="#fff"/><circle cx="748.65" cy="1013.50" r="3.4" fill="#e8464b"/><circle cx="796.15" cy="1013.50" r="6.6" fill="#fff"/><circle cx="796.15" cy="1013.50" r="3.4" fill="#e8464b"/><circle cx="843.65" cy="1013.50" r="6.6" fill="#fff"/><circle cx="843.65" cy="1013.50" r="3.4" fill="#e8464b"/><circle cx="891.15" cy="1013.50" r="6.6" fill="#fff"/><circle cx="891.15" cy="1013.50" r="3.4" fill="#e8464b"/><circle cx="938.65" cy="1013.50" r="6.6" fill="#fff"/><circle cx="938.65" cy="1013.50" r="3.4" fill="#e8464b"/><circle cx="986.15" cy="986.14" r="6.6" fill="#fff"/><circle cx="986.15" cy="986.14" r="3.4" fill="#e8464b"/><circle cx="1033.65" cy="1004.95" r="6.6" fill="#fff"/><circle cx="1033.65" cy="1004.95" r="3.4" fill="#e8464b"/><circle cx="1081.15" cy="1010.08" r="6.6" fill="#fff"/><circle cx="1081.15" cy="1010.08" r="3.4" fill="#e8464b"/><circle cx="1128.65" cy="1003.58" r="6.6" fill="#fff"/><circle cx="1128.65" cy="1003.58" r="3.4" fill="#e8464b"/><circle cx="1176.15" cy="1010.42" r="6.6" fill="#fff"/><circle cx="1176.15" cy="1010.42" r="3.4" fill="#e8464b"/></g>
<path d="M630.50 843.00V1014.00M630.50 1014.50H1200.50M630.50 1014.50h-6M630.50 979.50h-6M630.50 945.50h-6M630.50 911.50h-6M630.50 877.50h-6M630.50 843.50h-6M630.50 1014.00v6M678.50 1014.00v6M725.50 1014.00v6M773.50 1014.00v6M820.50 1014.00v6M868.50 1014.00v6M915.50 1014.00v6M963.50 1014.00v6M1010.50 1014.00v6M1058.50 1014.00v6M1105.50 1014.00v6M1153.50 1014.00v6M1200.50 1014.00v6" stroke="#787878" stroke-width="1" fill="none"/>
<text x="617.50" y="1017.90" font-family='Liberation Serif, serif' font-size="12.8" font-weight="400" text-anchor="end" fill="#333" stroke="#333" stroke-width="0.25" letter-spacing="0">0</text>
<text x="617.50" y="983.70" font-family='Liberation Serif, serif' font-size="12.8" font-weight="400" text-anchor="end" fill="#333" stroke="#333" stroke-width="0.25" letter-spacing="0">500,000</text>
<text x="617.50" y="949.50" font-family='Liberation Serif, serif' font-size="12.8" font-weight="400" text-anchor="end" fill="#333" stroke="#333" stroke-width="0.25" letter-spacing="0">1,000,000</text>
<text x="617.50" y="915.30" font-family='Liberation Serif, serif' font-size="12.8" font-weight="400" text-anchor="end" fill="#333" stroke="#333" stroke-width="0.25" letter-spacing="0">1,500,000</text>
<text x="617.50" y="881.10" font-family='Liberation Serif, serif' font-size="12.8" font-weight="400" text-anchor="end" fill="#333" stroke="#333" stroke-width="0.25" letter-spacing="0">2,000,000</text>
<text x="617.50" y="846.90" font-family='Liberation Serif, serif' font-size="12.8" font-weight="400" text-anchor="end" fill="#333" stroke="#333" stroke-width="0.25" letter-spacing="0">2,500,000</text>
<text x="652.65" y="1035.60" font-family='Liberation Serif, serif' font-size="12.8" font-weight="400" text-anchor="middle" fill="#333" stroke="#333" stroke-width="0.25" letter-spacing="0">Jun-21</text>
<text x="700.15" y="1035.60" font-family='Liberation Serif, serif' font-size="12.8" font-weight="400" text-anchor="middle" fill="#333" stroke="#333" stroke-width="0.25" letter-spacing="0">Jul-21</text>
<text x="747.65" y="1035.60" font-family='Liberation Serif, serif' font-size="12.8" font-weight="400" text-anchor="middle" fill="#333" stroke="#333" stroke-width="0.25" letter-spacing="0">Aug-21</text>
<text x="795.15" y="1035.60" font-family='Liberation Serif, serif' font-size="12.8" font-weight="400" text-anchor="middle" fill="#333" stroke="#333" stroke-width="0.25" letter-spacing="0">Sep-21</text>
<text x="842.65" y="1035.60" font-family='Liberation Serif, serif' font-size="12.8" font-weight="400" text-anchor="middle" fill="#333" stroke="#333" stroke-width="0.25" letter-spacing="0">Oct-21</text>
<text x="890.15" y="1035.60" font-family='Liberation Serif, serif' font-size="12.8" font-weight="400" text-anchor="middle" fill="#333" stroke="#333" stroke-width="0.25" letter-spacing="0">Nov-21</text>
<text x="937.65" y="1035.60" font-family='Liberation Serif, serif' font-size="12.8" font-weight="400" text-anchor="middle" fill="#333" stroke="#333" stroke-width="0.25" letter-spacing="0">Dec-21</text>
<text x="985.15" y="1035.60" font-family='Liberation Serif, serif' font-size="12.8" font-weight="400" text-anchor="middle" fill="#333" stroke="#333" stroke-width="0.25" letter-spacing="0">Jan-22</text>
<text x="1032.65" y="1035.60" font-family='Liberation Serif, serif' font-size="12.8" font-weight="400" text-anchor="middle" fill="#333" stroke="#333" stroke-width="0.25" letter-spacing="0">Feb-22</text>
<text x="1080.15" y="1035.60" font-family='Liberation Serif, serif' font-size="12.8" font-weight="400" text-anchor="middle" fill="#333" stroke="#333" stroke-width="0.25" letter-spacing="0">Mar-22</text>
<text x="1127.65" y="1035.60" font-family='Liberation Serif, serif' font-size="12.8" font-weight="400" text-anchor="middle" fill="#333" stroke="#333" stroke-width="0.25" letter-spacing="0">Apr-22</text>
<text x="1175.15" y="1035.60" font-family='Liberation Serif, serif' font-size="12.8" font-weight="400" text-anchor="middle" fill="#333" stroke="#333" stroke-width="0.25" letter-spacing="0">May-22</text>
<rect x="763.40" y="802.40" width="10.80" height="10.80" fill="#6fa8af"/>
<text x="780.00" y="813.40" font-family='Liberation Serif, serif' font-size="14" font-weight="400" text-anchor="start" fill="#333" stroke="#333" stroke-width="0.25" letter-spacing="-0.078">Current year</text>
<rect x="867.20" y="802.40" width="10.80" height="10.80" fill="#f5b541"/>
<text x="883.40" y="813.40" font-family='Liberation Serif, serif' font-size="14" font-weight="400" text-anchor="start" fill="#333" stroke="#333" stroke-width="0.25" letter-spacing="-0.01">Prior year</text>
<rect x="956.20" y="802.40" width="10.80" height="10.80" fill="#e8464b"/>
<text x="973.10" y="813.40" font-family='Liberation Serif, serif' font-size="14" font-weight="400" text-anchor="start" fill="#333" stroke="#333" stroke-width="0.25" letter-spacing="-0.111">Budget</text>
<rect x="1319.50" y="840.00" width="570.00" height="168.50" fill="#f0f4f8"/>
<path d="M1319.50 952.50H1889.50M1319.50 896.50H1889.50M1319.50 840.50H1889.50M1367.50 840.00V1008.50M1414.50 840.00V1008.50M1462.50 840.00V1008.50M1509.50 840.00V1008.50M1557.50 840.00V1008.50M1604.50 840.00V1008.50M1652.50 840.00V1008.50M1699.50 840.00V1008.50M1747.50 840.00V1008.50M1794.50 840.00V1008.50M1842.50 840.00V1008.50M1889.50 840.00V1008.50" stroke="#e0e0e0" stroke-width="1" fill="none"/>
<rect x="1325.95" y="999.51" width="16.70" height="8.99" fill="#6fa8af"/>
<rect x="1373.45" y="1001.20" width="16.70" height="7.30" fill="#6fa8af"/>
<rect x="1420.95" y="883.53" width="16.70" height="124.97" fill="#6fa8af"/>
<rect x="1468.45" y="999.23" width="16.70" height="9.27" fill="#6fa8af"/>
<rect x="1515.95" y="1001.76" width="16.70" height="6.74" fill="#6fa8af"/>
<rect x="1563.45" y="988.28" width="16.70" height="20.22" fill="#6fa8af"/>
<rect x="1610.95" y="994.46" width="16.70" height="14.04" fill="#6fa8af"/>
<rect x="1658.45" y="989.68" width="16.70" height="18.82" fill="#6fa8af"/>
<rect x="1705.95" y="993.34" width="16.70" height="15.16" fill="#6fa8af"/>
<rect x="1753.45" y="999.51" width="16.70" height="8.99" fill="#6fa8af"/>
<rect x="1800.95" y="993.05" width="16.70" height="15.45" fill="#6fa8af"/>
<rect x="1848.45" y="1000.36" width="16.70" height="8.14" fill="#6fa8af"/>
<rect x="1342.65" y="997.27" width="16.70" height="11.23" fill="#f5b541"/>
<rect x="1390.15" y="999.51" width="16.70" height="8.99" fill="#f5b541"/>
<rect x="1437.65" y="895.61" width="16.70" height="112.89" fill="#f5b541"/>
<rect x="1485.15" y="996.99" width="16.70" height="11.51" fill="#f5b541"/>
<rect x="1532.65" y="998.11" width="16.70" height="10.39" fill="#f5b541"/>
<rect x="1580.15" y="1000.08" width="16.70" height="8.43" fill="#f5b541"/>
<rect x="1627.65" y="992.21" width="16.70" height="16.29" fill="#f5b541"/>
<rect x="1675.15" y="993.62" width="16.70" height="14.88" fill="#f5b541"/>
<rect x="1722.65" y="996.42" width="16.70" height="12.08" fill="#f5b541"/>
<rect x="1770.15" y="1001.48" width="16.70" height="7.02" fill="#f5b541"/>
<rect x="1817.65" y="996.14" width="16.70" height="12.36" fill="#f5b541"/>
<rect x="1865.15" y="1002.04" width="16.70" height="6.46" fill="#f5b541"/>
<path d="M1319.50 840.00V1008.50M1319.50 1008.50H1889.50M1319.50 1008.50h-6M1319.50 952.50h-6M1319.50 896.50h-6M1319.50 840.50h-6M1319.50 1008.50v6M1367.50 1008.50v6M1414.50 1008.50v6M1462.50 1008.50v6M1509.50 1008.50v6M1557.50 1008.50v6M1604.50 1008.50v6M1652.50 1008.50v6M1699.50 1008.50v6M1747.50 1008.50v6M1794.50 1008.50v6M1842.50 1008.50v6M1889.50 1008.50v6" stroke="#787878" stroke-width="1" fill="none"/>
<text x="1306.50" y="1012.40" font-family='Liberation Serif, serif' font-size="12.8" font-weight="400" text-anchor="end" fill="#333" stroke="#333" stroke-width="0.25" letter-spacing="0">0</text>
<text x="1306.50" y="956.23" font-family='Liberation Serif, serif' font-size="12.8" font-weight="400" text-anchor="end" fill="#333" stroke="#333" stroke-width="0.25" letter-spacing="0">200,000</text>
<text x="1306.50" y="900.07" font-family='Liberation Serif, serif' font-size="12.8" font-weight="400" text-anchor="end" fill="#333" stroke="#333" stroke-width="0.25" letter-spacing="0">400,000</text>
<text x="1306.50" y="843.90" font-family='Liberation Serif, serif' font-size="12.8" font-weight="400" text-anchor="end" fill="#333" stroke="#333" stroke-width="0.25" letter-spacing="0">600,000</text>
<text x="1341.65" y="1030.10" font-family='Liberation Serif, serif' font-size="12.8" font-weight="400" text-anchor="middle" fill="#333" stroke="#333" stroke-width="0.25" letter-spacing="0">Jun-21</text>
<text x="1389.15" y="1030.10" font-family='Liberation Serif, serif' font-size="12.8" font-weight="400" text-anchor="middle" fill="#333" stroke="#333" stroke-width="0.25" letter-spacing="0">Jul-21</text>
<text x="1436.65" y="1030.10" font-family='Liberation Serif, serif' font-size="12.8" font-weight="400" text-anchor="middle" fill="#333" stroke="#333" stroke-width="0.25" letter-spacing="0">Aug-21</text>
<text x="1484.15" y="1030.10" font-family='Liberation Serif, serif' font-size="12.8" font-weight="400" text-anchor="middle" fill="#333" stroke="#333" stroke-width="0.25" letter-spacing="0">Sep-21</text>
<text x="1531.65" y="1030.10" font-family='Liberation Serif, serif' font-size="12.8" font-weight="400" text-anchor="middle" fill="#333" stroke="#333" stroke-width="0.25" letter-spacing="0">Oct-21</text>
<text x="1579.15" y="1030.10" font-family='Liberation Serif, serif' font-size="12.8" font-weight="400" text-anchor="middle" fill="#333" stroke="#333" stroke-width="0.25" letter-spacing="0">Nov-21</text>
<text x="1626.65" y="1030.10" font-family='Liberation Serif, serif' font-size="12.8" font-weight="400" text-anchor="middle" fill="#333" stroke="#333" stroke-width="0.25" letter-spacing="0">Dec-21</text>
<text x="1674.15" y="1030.10" font-family='Liberation Serif, serif' font-size="12.8" font-weight="400" text-anchor="middle" fill="#333" stroke="#333" stroke-width="0.25" letter-spacing="0">Jan-22</text>
<text x="1721.65" y="1030.10" font-family='Liberation Serif, serif' font-size="12.8" font-weight="400" text-anchor="middle" fill="#333" stroke="#333" stroke-width="0.25" letter-spacing="0">Feb-22</text>
<text x="1769.15" y="1030.10" font-family='Liberation Serif, serif' font-size="12.8" font-weight="400" text-anchor="middle" fill="#333" stroke="#333" stroke-width="0.25" letter-spacing="0">Mar-22</text>
<text x="1816.65" y="1030.10" font-family='Liberation Serif, serif' font-size="12.8" font-weight="400" text-anchor="middle" fill="#333" stroke="#333" stroke-width="0.25" letter-spacing="0">Apr-22</text>
<text x="1864.15" y="1030.10" font-family='Liberation Serif, serif' font-size="12.8" font-weight="400" text-anchor="middle" fill="#333" stroke="#333" stroke-width="0.25" letter-spacing="0">May-22</text>
<rect x="1496.30" y="800.10" width="10.80" height="10.80" fill="#6fa8af"/>
<text x="1512.30" y="811.10" font-family='Liberation Serif, serif' font-size="14" font-weight="400" text-anchor="start" fill="#333" stroke="#333" stroke-width="0.25" letter-spacing="-0.151">Current year</text>
<rect x="1597.70" y="800.10" width="10.80" height="10.80" fill="#f5b541"/>
<text x="1614.20" y="811.10" font-family='Liberation Serif, serif' font-size="14" font-weight="400" text-anchor="start" fill="#333" stroke="#333" stroke-width="0.25" letter-spacing="-0.122">Prior year</text>
</svg>
</body></html>
